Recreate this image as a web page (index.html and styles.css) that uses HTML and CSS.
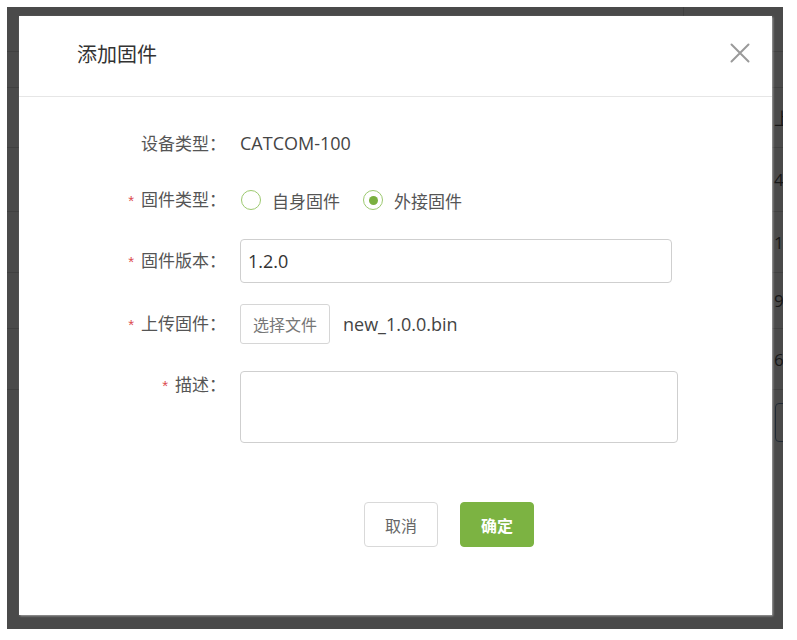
FILE: index.html
```html
<!DOCTYPE html>
<html lang="zh-CN">
<head>
<meta charset="utf-8">
<title>添加固件</title>
<link rel="stylesheet" href="styles.css">
</head>
<body>
<div class="screen">
  <div class="page">
    <div class="prow prow-a"><span class="vline"></span></div>
    <div class="prow prow-b full"></div>
    <div class="prow prow-c"><span class="ptext">上</span></div>
    <div class="prow prow-d"><span class="ptext">4</span></div>
    <div class="prow prow-e"><span class="ptext">1</span></div>
    <div class="prow prow-f"><span class="ptext">9</span></div>
    <div class="prow prow-g"><span class="ptext">6</span></div>
    <div class="pbtn-wrap"><span class="pbtn"></span></div>
  </div>
  <div class="mask"></div>
  <div class="modal">
    <div class="modal-header">
      <h2 class="modal-title">添加固件</h2>
      <button class="close" type="button" aria-label="关闭">
        <svg width="20" height="20" viewBox="0 0 20 20"><path d="M1.5 1.5 L18.5 18.5 M18.5 1.5 L1.5 18.5" stroke="#9a9a9a" stroke-width="2" fill="none" stroke-linecap="round"/></svg>
      </button>
    </div>
    <div class="modal-body">
      <div class="form">
        <div class="row row-1">
          <label class="label">设备类型：</label>
          <div class="value text">CATCOM-100</div>
        </div>
        <div class="row row-2">
          <label class="label"><span class="req">*</span>固件类型：</label>
          <div class="value radios">
            <span class="radio"><span class="circle"></span>自身固件</span>
            <span class="radio checked"><span class="circle"></span>外接固件</span>
          </div>
        </div>
        <div class="row row-3">
          <label class="label"><span class="req">*</span>固件版本：</label>
          <div class="value"><div class="input">1.2.0</div></div>
        </div>
        <div class="row row-4">
          <label class="label"><span class="req">*</span>上传固件：</label>
          <div class="value file">
            <span class="file-btn">选择文件</span>
            <span class="file-name">new_1.0.0.bin</span>
          </div>
        </div>
        <div class="row row-5">
          <label class="label top"><span class="req">*</span>描述：</label>
          <div class="value"><div class="textarea"></div></div>
        </div>
      </div>
      <div class="actions">
        <button class="btn btn-cancel" type="button">取消</button>
        <button class="btn btn-ok" type="button">确定</button>
      </div>
    </div>
  </div>
</div>
</body>
</html>
```

FILE: styles.css
```css
* { box-sizing: border-box; }
html, body { margin: 0; padding: 0; background: #fff; }
body {
  font-family: "Open Sans", "Noto Sans CJK SC", sans-serif;
  color: #444;
}
.screen {
  position: relative;
  margin: 7px 0 0 7px;
  width: 776px;
  height: 622px;
  overflow: hidden;
}
.page {
  background: #fff;
  height: 100%;
}
.prow {
  position: relative;
  border-bottom: 1px solid #dcdcdc;
  display: flex;
  align-items: center;
  padding-left: 767px;
  font-size: 17px;
  color: #555;
}
.prow-a { height: 45px; }
.prow-b { height: 36px; }
.prow-c { height: 60px; }
.prow-d { height: 64px; }
.prow-e { height: 61px; }
.prow-f { height: 56px; }
.prow-g { height: 61px; }
.vline {
  position: absolute;
  left: 676px;
  top: 0;
  bottom: 0;
  border-left: 1px solid #dcdcdc;
}
.pbtn-wrap { padding: 13px 0 0 768px; }
.pbtn {
  display: block;
  width: 40px;
  height: 39px;
  border: 1px solid #6f8fb4;
  border-radius: 4px;
}
.mask {
  position: absolute;
  inset: 0;
  background: rgba(0, 0, 0, 0.71);
}
.modal {
  position: absolute;
  left: 12px;
  top: 9px;
  width: 753px;
  height: 599px;
  background: #fff;
  box-shadow: 1px 1px 2px rgba(255, 255, 255, 0.5);
}
.modal-header {
  height: 81px;
  border-bottom: 1px solid #e6e6e6;
  display: flex;
  align-items: center;
  justify-content: space-between;
  padding: 0 22px 6px 58px;
}
.modal-title {
  margin: 0;
  font-size: 20px;
  font-weight: normal;
  color: #333;
  font-family: "Noto Sans CJK SC", sans-serif;
}
.close {
  border: 0;
  background: none;
  padding: 0;
  width: 20px;
  height: 20px;
  display: flex;
}
.modal-body { padding-top: 26px; }
.row {
  display: grid;
  grid-template-columns: 207px 1fr;
  column-gap: 14px;
  align-items: center;
}
.row-1 { height: 40px; }
.row-2 { height: 40px; margin-top: 17px; }
.row-3 { height: 44px; margin-top: 19px; }
.row-4 { height: 40px; margin-top: 21px; }
.row-5 { margin-top: 27px; align-items: start; }
.label {
  text-align: right;
  font-size: 17px;
  color: #555;
  font-family: "Noto Sans CJK SC", sans-serif;
  line-height: 26px;
  white-space: nowrap;
}
.req {
  color: #dc4b50;
  font-size: 15px;
  margin-right: 7px;
  font-family: "Liberation Sans", sans-serif;
}
.value { font-size: 18px; color: #444; }
.radios { display: flex; align-items: center; gap: 22px; font-size: 17px; }
.radio {
  display: inline-flex;
  align-items: center;
  font-family: "Noto Sans CJK SC", sans-serif;
  color: #555;
}
.circle {
  width: 20px;
  height: 20px;
  border: 1px solid #9cc96f;
  border-radius: 50%;
  margin: 0 11px 0 1px;
  display: inline-flex;
  align-items: center;
  justify-content: center;
}
.checked .circle::after {
  content: "";
  width: 9px;
  height: 9px;
  border-radius: 50%;
  background: #7ab03f;
}
.input {
  width: 432px;
  height: 44px;
  border: 1px solid #cfcfcf;
  border-radius: 4px;
  padding-left: 7px;
  display: flex;
  align-items: center;
  color: #333;
}
.file { display: flex; align-items: center; gap: 13px; }
.file-btn {
  width: 90px;
  height: 40px;
  border: 1px solid #d6d6d6;
  border-radius: 3px;
  display: flex;
  align-items: center;
  justify-content: center;
  font-size: 16px;
  color: #777;
  font-family: "Noto Sans CJK SC", sans-serif;
}
.file-name { color: #444; }
.textarea {
  width: 438px;
  height: 72px;
  border: 1px solid #cfcfcf;
  border-radius: 4px;
}
.actions {
  display: flex;
  gap: 22px;
  padding-left: 345px;
  margin-top: 59px;
}
.btn {
  width: 74px;
  height: 45px;
  border-radius: 4px;
  font-size: 16px;
  font-family: "Noto Sans CJK SC", sans-serif;
  padding: 0;
}
.btn-cancel {
  background: #fff;
  border: 1px solid #d9d9d9;
  color: #666;
}
.btn-ok {
  background: #7cb342;
  border: 1px solid #7cb342;
  color: #fff;
  font-weight: bold;
}
```
